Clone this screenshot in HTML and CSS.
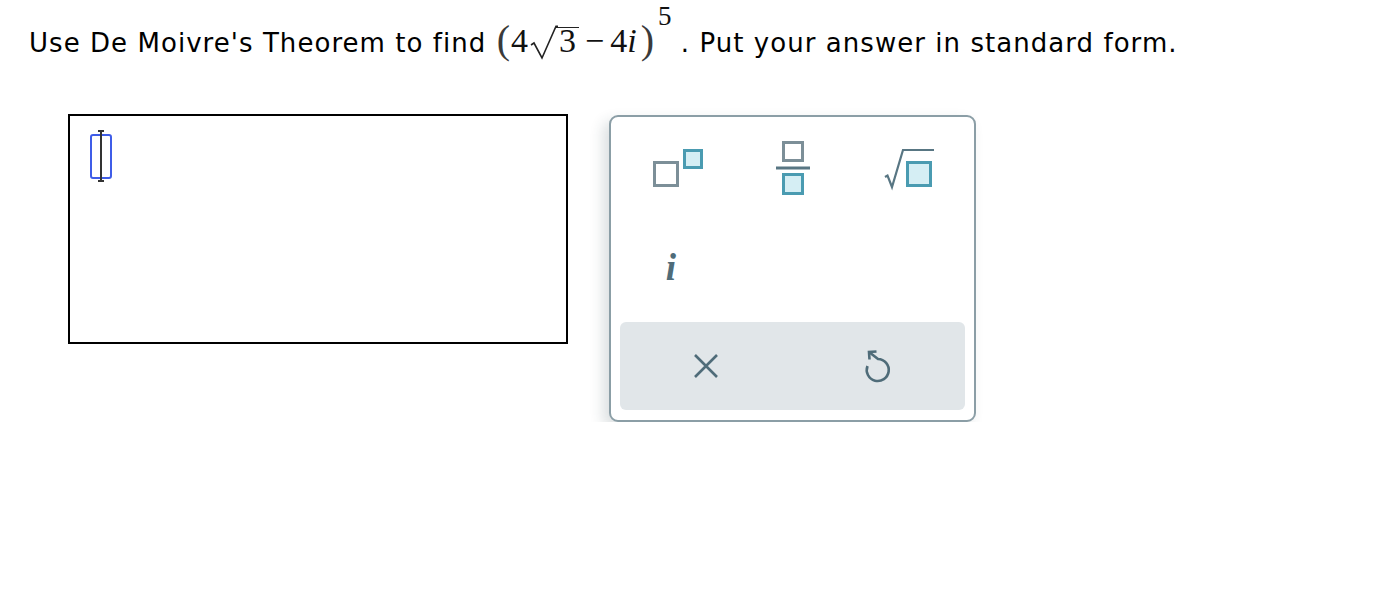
FILE: index.html
```html
<!DOCTYPE html>
<html>
<head>
<meta charset="utf-8">
<link rel="stylesheet" href="styles.css">
</head>
<body>
<div class="question"><span class="txt">Use De Moivre's Theorem to find </span><span class="math"><span class="paren">(</span><span class="mn">4</span><span class="sqrt"><svg class="rad" width="28" height="35" viewBox="0 0 28 35"><path d="M1 20 L4 18 L12 33 L26 1.2 L28 1.2" fill="none" stroke="#222" stroke-width="1.6" stroke-linejoin="miter"/></svg><span class="radicand">3</span></span><span class="mo">−</span><span class="mn">4</span><span class="mi">i</span><span class="paren">)</span><span class="sup">5</span></span><span class="txt"> . Put your answer in standard form.</span></div>

<div class="work">
  <div class="answer">
    <span class="cursor"><svg class="ibeam" width="10" height="52" viewBox="0 0 10 52"><path d="M2 1 H8 M5 1 V51 M2 51 H8" stroke="#333" stroke-width="2" fill="none"/></svg></span>
  </div>
  <div class="palette">
    <div class="keys">
      <button class="key"><svg width="52" height="40" viewBox="0 0 52 40"><rect x="2.5" y="14.5" width="23" height="23" fill="#fff" stroke="#7c8f98" stroke-width="3"/><rect x="32.5" y="2.5" width="17" height="17" fill="#d5eef4" stroke="#4a9bb1" stroke-width="3"/></svg></button>
      <button class="key"><svg width="36" height="58" viewBox="0 0 36 58"><rect x="8.5" y="3.5" width="19" height="18" fill="#fff" stroke="#7c8f98" stroke-width="3"/><rect x="1" y="27.5" width="34" height="3" fill="#587683"/><rect x="8.5" y="35.5" width="19" height="19" fill="#d5eef4" stroke="#4a9bb1" stroke-width="3"/></svg></button>
      <button class="key"><svg width="56" height="45" viewBox="0 0 56 45"><path d="M5 31 L7.5 29.5 L12 41 L23 4 L54 4" fill="none" stroke="#587683" stroke-width="2.2"/><rect x="27.5" y="16.5" width="23" height="23" fill="#d5eef4" stroke="#4a9bb1" stroke-width="3"/></svg></button>
      <button class="key key-i"><span class="ivar">i</span></button>
    </div>
    <div class="actions">
      <button class="act"><svg width="26" height="26" viewBox="0 0 26 26"><path d="M2 2 L24 24 M24 2 L2 24" stroke="#4f6c79" stroke-width="2.6" fill="none"/></svg></button>
      <button class="act"><svg width="30" height="36" viewBox="0 0 30 36"><path d="M5 4 L14 11 A11 11 0 1 1 3.5 18" fill="none" stroke="#4f6c79" stroke-width="2.6"/><path d="M12.5 3.5 L5 4 L5.5 11.5" fill="none" stroke="#4f6c79" stroke-width="2.6"/></svg></button>
    </div>
  </div>
</div>
</body>
</html>
```

FILE: styles.css
```css
html, body {
  margin: 0;
  padding: 0;
  background: #fff;
}

.question {
  font-family: "DejaVu Sans", Verdana, sans-serif;
  font-size: 26px;
  color: #000;
  line-height: 70px;
  height: 70px;
  padding-left: 29px;
  margin-top: 8px;
  white-space: nowrap;
}

.txt {
  letter-spacing: 1.05px;
}

.math {
  font-family: "Liberation Serif", "Times New Roman", serif;
  font-size: 34px;
  line-height: 1;
  color: #111;
  letter-spacing: 0;
}

.math .paren {
  font-size: 40px;
  color: #3a3a3a;
  vertical-align: -1px;
  padding: 0 1px;
}

.math .mn { line-height: 1; }

.math .mi {
  font-style: italic;
  padding-right: 3px;
}

.math .mo {
  padding: 0 6px;
}

.sqrt {
  display: inline-block;
  line-height: 1;
}

.rad {
  vertical-align: -8px;
  margin-left: 2px;
}

.radicand {
  display: inline-block;
  border-top: 1.6px solid #222;
  padding: 3px 3px 0 3px;
  margin-left: -2px;
  line-height: 19px;
}

.math .sup {
  font-size: 27px;
  line-height: 0;
  vertical-align: 27px;
  padding-left: 3px;
}

.work {
  display: flex;
  align-items: flex-start;
  gap: 41px;
  padding-left: 68px;
  margin-top: 36px;
}

.answer {
  box-sizing: border-box;
  width: 500px;
  height: 230px;
  border: 2px solid #000;
  padding: 18px 0 0 20px;
}

.cursor {
  display: inline-block;
  position: relative;
  box-sizing: border-box;
  width: 22px;
  height: 45px;
  border: 2.5px solid #3f5de8;
  border-radius: 3px;
}

.ibeam {
  position: absolute;
  left: 3.5px;
  top: -6px;
}

.palette {
  box-sizing: border-box;
  width: 367px;
  height: 307px;
  margin-top: 1px;
  border: 2px solid #8b9ea6;
  border-radius: 9px;
  padding: 9px;
  background: #fff;
  box-shadow: -6px 6px 14px rgba(40, 60, 70, 0.16);
}

.keys {
  display: grid;
  grid-template-columns: repeat(3, 1fr);
  grid-template-rows: 84px 84px;
  row-gap: 15px;
}

.key, .act {
  display: flex;
  align-items: center;
  justify-content: center;
  border: 0;
  background: transparent;
  padding: 0;
  margin: 0;
}

.key-i .ivar {
  font-family: "Liberation Serif", "Times New Roman", serif;
  font-weight: bold;
  font-style: italic;
  font-size: 37px;
  color: #4f6c79;
  margin-right: 13px;
}

.actions {
  margin-top: 13px;
  height: 88px;
  background: #e1e6e9;
  border-radius: 6px;
  display: grid;
  grid-template-columns: 1fr 1fr;
}
```
